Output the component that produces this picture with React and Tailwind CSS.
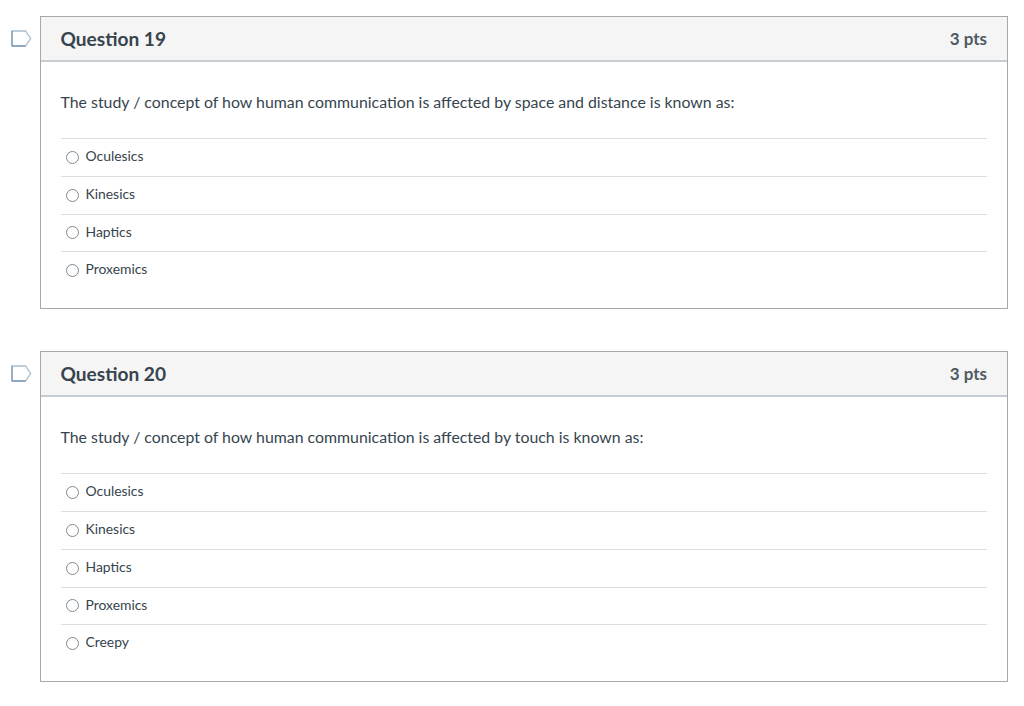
import React from 'react';

const FONT = 'font-["Lato","Open_Sans",sans-serif]';

const questions = [
  {
    id: 19,
    text: 'The study / concept of how human communication is affected by space and distance is known as:',
    options: ['Oculesics', 'Kinesics', 'Haptics', 'Proxemics'],
  },
  {
    id: 20,
    text: 'The study / concept of how human communication is affected by touch is known as:',
    options: ['Oculesics', 'Kinesics', 'Haptics', 'Proxemics', 'Creepy'],
  },
];

const Flag = () => (
  <svg width="21" height="17" viewBox="0 0 21 17" className="absolute left-[-30px] top-[13px]">
    <path d="M1 1 H14.5 L19.7 8.5 L14.5 16 H1 Z" fill="none" stroke="#a9bdd0" strokeWidth="1.3" />
    <path d="M1 16 V1 M1 16 H14.5" fill="none" stroke="#7f9cb9" strokeWidth="1.3" />
  </svg>
);

const Question = ({ q }) => (
  <div className="relative border border-[#a8a8a8]">
    <Flag />
    <div className="flex h-[45px] items-center justify-between border-b-2 border-[#c7cdd1] bg-[#f5f5f5] pl-[19.5px] pr-5 text-[#2d3b45]">
      <span className="mt-[2px] text-[19.1px] font-bold text-[#36444e]">Question {q.id}</span>
      <span className="text-[17px] font-bold text-[#4f5a62]">3 pts</span>
    </div>
    <div className="pb-[19px] pl-[19.5px] pr-5 pt-[29px]">
      <p className="mb-[26px] h-[21px] text-[15.86px] leading-[21px] text-[#36444e]">{q.text}</p>
      {q.options.map((opt) => (
        <div key={opt} className="flex h-[37.8px] items-center border-t border-[#dcdfe1] pb-[2px] pl-[5px] text-[13.9px] text-[#36444e]">
          <span className="mr-[7px] mt-[2px] h-[13px] w-[13px] rounded-full border border-[#7f8a90] bg-white" />
          <span>{opt}</span>
        </div>
      ))}
    </div>
  </div>
);

export default function App() {
  return (
    <div className={`${FONT} flex min-h-[706px] flex-col gap-[42px] bg-white pb-6 pl-10 pr-4 pt-4`}>
      {questions.map((q) => (
        <Question key={q.id} q={q} />
      ))}
    </div>
  );
}
